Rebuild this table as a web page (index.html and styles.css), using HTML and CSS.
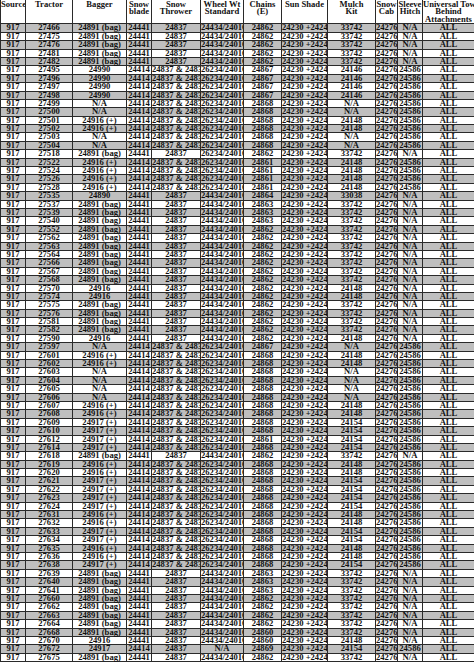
FILE: index.html
```html
<!DOCTYPE html>
<html>
<head>
<meta charset="utf-8">
<link rel="stylesheet" href="styles.css">
</head>
<body>
<div class="sheet">
<div class="row head"><div>Source</div><div>Tractor</div><div>Bagger</div><div>Snow<br>blade</div><div>Snow<br>Thrower</div><div>Wheel Wt<br>Standard</div><div>Chains<br>(E)</div><div>Sun Shade</div><div>Mulch<br>Kit</div><div>Snow<br>Cab</div><div>Sleeve<br>Hitch</div><div>Universal Tow<br>Behind<br>Attachments</div></div>
<div class="row g"><div>917</div><div>27466</div><div>24891 (bag)</div><div>24441</div><div>24837</div><div>24434/24016</div><div>24862</div><div>24230 +24240</div><div>33742</div><div>24276</div><div>N/A</div><div>ALL</div></div>
<div class="row"><div>917</div><div>27475</div><div>24891 (bag)</div><div>24441</div><div>24837</div><div>24434/24016</div><div>24862</div><div>24230 +24240</div><div>33742</div><div>24276</div><div>N/A</div><div>ALL</div></div>
<div class="row g"><div>917</div><div>27476</div><div>24891 (bag)</div><div>24441</div><div>24837</div><div>24434/24016</div><div>24862</div><div>24230 +24240</div><div>33742</div><div>24276</div><div>N/A</div><div>ALL</div></div>
<div class="row"><div>917</div><div>27481</div><div>24891 (bag)</div><div>24441</div><div>24837</div><div>24434/24016</div><div>24862</div><div>24230 +24240</div><div>33742</div><div>24276</div><div>N/A</div><div>ALL</div></div>
<div class="row g"><div>917</div><div>27482</div><div>24891 (bag)</div><div>24441</div><div>24837</div><div>24434/24016</div><div>24862</div><div>24230 +24240</div><div>33742</div><div>24276</div><div>N/A</div><div>ALL</div></div>
<div class="row"><div>917</div><div>27495</div><div>24990</div><div>24414</div><div>24837 &amp; 24831</div><div>26234/24016</div><div>24867</div><div>24230 +24240</div><div>24146</div><div>24276</div><div>24586</div><div>ALL</div></div>
<div class="row g"><div>917</div><div>27496</div><div>24990</div><div>24414</div><div>24837 &amp; 24831</div><div>26234/24016</div><div>24867</div><div>24230 +24240</div><div>24146</div><div>24276</div><div>24586</div><div>ALL</div></div>
<div class="row"><div>917</div><div>27497</div><div>24990</div><div>24414</div><div>24837 &amp; 24831</div><div>26234/24016</div><div>24867</div><div>24230 +24240</div><div>24146</div><div>24276</div><div>24586</div><div>ALL</div></div>
<div class="row g"><div>917</div><div>27498</div><div>24990</div><div>24414</div><div>24837 &amp; 24831</div><div>26234/24016</div><div>24867</div><div>24230 +24240</div><div>24146</div><div>24276</div><div>24586</div><div>ALL</div></div>
<div class="row"><div>917</div><div>27499</div><div>N/A</div><div>24414</div><div>24837 &amp; 24831</div><div>26234/24016</div><div>24868</div><div>24230 +24240</div><div>N/A</div><div>24276</div><div>24586</div><div>ALL</div></div>
<div class="row g"><div>917</div><div>27500</div><div>N/A</div><div>24414</div><div>24837 &amp; 24831</div><div>26234/24016</div><div>24868</div><div>24230 +24240</div><div>N/A</div><div>24276</div><div>24586</div><div>ALL</div></div>
<div class="row"><div>917</div><div>27501</div><div>24916 (+)</div><div>24414</div><div>24837 &amp; 24831</div><div>26234/24016</div><div>24868</div><div>24230 +24240</div><div>24148</div><div>24276</div><div>24586</div><div>ALL</div></div>
<div class="row g"><div>917</div><div>27502</div><div>24916 (+)</div><div>24414</div><div>24837 &amp; 24831</div><div>26234/24016</div><div>24868</div><div>24230 +24240</div><div>24148</div><div>24276</div><div>24586</div><div>ALL</div></div>
<div class="row"><div>917</div><div>27503</div><div>N/A</div><div>24414</div><div>24837 &amp; 24831</div><div>26234/24016</div><div>24868</div><div>24230 +24240</div><div>N/A</div><div>24276</div><div>24586</div><div>ALL</div></div>
<div class="row g"><div>917</div><div>27504</div><div>N/A</div><div>24414</div><div>24837 &amp; 24831</div><div>26234/24016</div><div>24868</div><div>24230 +24240</div><div>N/A</div><div>24276</div><div>24586</div><div>ALL</div></div>
<div class="row"><div>917</div><div>27518</div><div>24891 (bag)</div><div>24441</div><div>24837</div><div>26234/24016</div><div>24862</div><div>24230 +24240</div><div>33742</div><div>24276</div><div>N/A</div><div>ALL</div></div>
<div class="row g"><div>917</div><div>27522</div><div>24916 (+)</div><div>24414</div><div>24837 &amp; 24831</div><div>26234/24016</div><div>24861</div><div>24230 +24240</div><div>24148</div><div>24276</div><div>24586</div><div>ALL</div></div>
<div class="row"><div>917</div><div>27524</div><div>24916 (+)</div><div>24414</div><div>24837 &amp; 24831</div><div>26234/24016</div><div>24861</div><div>24230 +24240</div><div>24148</div><div>24276</div><div>24586</div><div>ALL</div></div>
<div class="row g"><div>917</div><div>27526</div><div>24916 (+)</div><div>24414</div><div>24837 &amp; 24831</div><div>26234/24016</div><div>24861</div><div>24230 +24240</div><div>24148</div><div>24276</div><div>24586</div><div>ALL</div></div>
<div class="row"><div>917</div><div>27528</div><div>24916 (+)</div><div>24414</div><div>24837 &amp; 24831</div><div>26234/24016</div><div>24861</div><div>24230 +24240</div><div>24148</div><div>24276</div><div>24586</div><div>ALL</div></div>
<div class="row g"><div>917</div><div>27535</div><div>24890</div><div>24441</div><div>24837</div><div>24434/24016</div><div>24864</div><div>24230 +24240</div><div>33038</div><div>24276</div><div>N/A</div><div>ALL</div></div>
<div class="row"><div>917</div><div>27537</div><div>24891 (bag)</div><div>24441</div><div>24837</div><div>24434/24016</div><div>24863</div><div>24230 +24240</div><div>33742</div><div>24276</div><div>N/A</div><div>ALL</div></div>
<div class="row g"><div>917</div><div>27539</div><div>24891 (bag)</div><div>24441</div><div>24837</div><div>24434/24016</div><div>24863</div><div>24230 +24240</div><div>33742</div><div>24276</div><div>N/A</div><div>ALL</div></div>
<div class="row"><div>917</div><div>27540</div><div>24891 (bag)</div><div>24441</div><div>24837</div><div>24434/24016</div><div>24863</div><div>24230 +24240</div><div>33742</div><div>24276</div><div>N/A</div><div>ALL</div></div>
<div class="row g"><div>917</div><div>27552</div><div>24891 (bag)</div><div>24441</div><div>24837</div><div>24434/24016</div><div>24862</div><div>24230 +24240</div><div>33742</div><div>24276</div><div>N/A</div><div>ALL</div></div>
<div class="row"><div>917</div><div>27562</div><div>24891 (bag)</div><div>24441</div><div>24837</div><div>24434/24016</div><div>24862</div><div>24230 +24240</div><div>33742</div><div>24276</div><div>N/A</div><div>ALL</div></div>
<div class="row g"><div>917</div><div>27563</div><div>24891 (bag)</div><div>24441</div><div>24837</div><div>24434/24016</div><div>24862</div><div>24230 +24240</div><div>33742</div><div>24276</div><div>N/A</div><div>ALL</div></div>
<div class="row"><div>917</div><div>27564</div><div>24891 (bag)</div><div>24441</div><div>24837</div><div>24434/24016</div><div>24862</div><div>24230 +24240</div><div>33742</div><div>24276</div><div>N/A</div><div>ALL</div></div>
<div class="row g"><div>917</div><div>27566</div><div>24891 (bag)</div><div>24441</div><div>24837</div><div>24434/24016</div><div>24862</div><div>24230 +24240</div><div>33742</div><div>24276</div><div>N/A</div><div>ALL</div></div>
<div class="row"><div>917</div><div>27567</div><div>24891 (bag)</div><div>24441</div><div>24837</div><div>24434/24016</div><div>24862</div><div>24230 +24240</div><div>33742</div><div>24276</div><div>N/A</div><div>ALL</div></div>
<div class="row g"><div>917</div><div>27568</div><div>24891 (bag)</div><div>24441</div><div>24837</div><div>24434/24016</div><div>24862</div><div>24230 +24240</div><div>33742</div><div>24276</div><div>N/A</div><div>ALL</div></div>
<div class="row"><div>917</div><div>27570</div><div>24916</div><div>24441</div><div>24837</div><div>24434/24016</div><div>24862</div><div>24230 +24240</div><div>24148</div><div>24276</div><div>N/A</div><div>ALL</div></div>
<div class="row g"><div>917</div><div>27574</div><div>24916</div><div>24441</div><div>24837</div><div>24434/24016</div><div>24862</div><div>24230 +24240</div><div>24148</div><div>24276</div><div>N/A</div><div>ALL</div></div>
<div class="row"><div>917</div><div>27575</div><div>24891 (bag)</div><div>24441</div><div>24837</div><div>24434/24016</div><div>24862</div><div>24230 +24240</div><div>33742</div><div>24276</div><div>N/A</div><div>ALL</div></div>
<div class="row g"><div>917</div><div>27576</div><div>24891 (bag)</div><div>24441</div><div>24837</div><div>24434/24016</div><div>24862</div><div>24230 +24240</div><div>33742</div><div>24276</div><div>N/A</div><div>ALL</div></div>
<div class="row"><div>917</div><div>27581</div><div>24891 (bag)</div><div>24441</div><div>24837</div><div>24434/24016</div><div>24862</div><div>24230 +24240</div><div>33742</div><div>24276</div><div>N/A</div><div>ALL</div></div>
<div class="row g"><div>917</div><div>27582</div><div>24891 (bag)</div><div>24441</div><div>24837</div><div>24434/24016</div><div>24862</div><div>24230 +24240</div><div>33742</div><div>24276</div><div>N/A</div><div>ALL</div></div>
<div class="row"><div>917</div><div>27590</div><div>24916</div><div>24441</div><div>24837</div><div>24434/24016</div><div>24862</div><div>24230 +24240</div><div>24148</div><div>24276</div><div>N/A</div><div>ALL</div></div>
<div class="row g"><div>917</div><div>27597</div><div>N/A</div><div>24414</div><div>24837 &amp; 24831</div><div>26234/24016</div><div>24867</div><div>24230 +24240</div><div>N/A</div><div>24276</div><div>24586</div><div>ALL</div></div>
<div class="row"><div>917</div><div>27601</div><div>24916 (+)</div><div>24414</div><div>24837 &amp; 24831</div><div>26234/24016</div><div>24868</div><div>24230 +24240</div><div>24148</div><div>24276</div><div>24586</div><div>ALL</div></div>
<div class="row g"><div>917</div><div>27602</div><div>24916 (+)</div><div>24414</div><div>24837 &amp; 24831</div><div>26234/24016</div><div>24868</div><div>24230 +24240</div><div>24148</div><div>24276</div><div>24586</div><div>ALL</div></div>
<div class="row"><div>917</div><div>27603</div><div>N/A</div><div>24414</div><div>24837 &amp; 24831</div><div>26234/24016</div><div>24868</div><div>24230 +24240</div><div>N/A</div><div>24276</div><div>24586</div><div>ALL</div></div>
<div class="row g"><div>917</div><div>27604</div><div>N/A</div><div>24414</div><div>24837 &amp; 24831</div><div>26234/24016</div><div>24868</div><div>24230 +24240</div><div>N/A</div><div>24276</div><div>24586</div><div>ALL</div></div>
<div class="row"><div>917</div><div>27605</div><div>N/A</div><div>24414</div><div>24837 &amp; 24831</div><div>26234/24016</div><div>24868</div><div>24230 +24240</div><div>N/A</div><div>24276</div><div>24586</div><div>ALL</div></div>
<div class="row g"><div>917</div><div>27606</div><div>N/A</div><div>24414</div><div>24837 &amp; 24831</div><div>26234/24016</div><div>24868</div><div>24230 +24240</div><div>N/A</div><div>24276</div><div>24586</div><div>ALL</div></div>
<div class="row"><div>917</div><div>27607</div><div>24916 (+)</div><div>24414</div><div>24837 &amp; 24831</div><div>26234/24016</div><div>24868</div><div>24230 +24240</div><div>24148</div><div>24276</div><div>24586</div><div>ALL</div></div>
<div class="row g"><div>917</div><div>27608</div><div>24916 (+)</div><div>24414</div><div>24837 &amp; 24831</div><div>26234/24016</div><div>24868</div><div>24230 +24240</div><div>24148</div><div>24276</div><div>24586</div><div>ALL</div></div>
<div class="row"><div>917</div><div>27609</div><div>24917 (+)</div><div>24414</div><div>24837 &amp; 24831</div><div>26234/24016</div><div>24868</div><div>24230 +24240</div><div>24154</div><div>24276</div><div>24586</div><div>ALL</div></div>
<div class="row g"><div>917</div><div>27610</div><div>24917 (+)</div><div>24414</div><div>24837 &amp; 24831</div><div>26234/24016</div><div>24868</div><div>24230 +24240</div><div>24154</div><div>24276</div><div>24586</div><div>ALL</div></div>
<div class="row"><div>917</div><div>27612</div><div>24917 (+)</div><div>24414</div><div>24837 &amp; 24831</div><div>26234/24016</div><div>24861</div><div>24230 +24240</div><div>24154</div><div>24276</div><div>24586</div><div>ALL</div></div>
<div class="row g"><div>917</div><div>27614</div><div>24917 (+)</div><div>24414</div><div>24837 &amp; 24831</div><div>26234/24016</div><div>24868</div><div>24230 +24240</div><div>24154</div><div>24276</div><div>24586</div><div>ALL</div></div>
<div class="row"><div>917</div><div>27618</div><div>24891 (bag)</div><div>24441</div><div>24837</div><div>24434/24016</div><div>24862</div><div>24230 +24240</div><div>33742</div><div>24276</div><div>N/A</div><div>ALL</div></div>
<div class="row g"><div>917</div><div>27619</div><div>24916 (+)</div><div>24414</div><div>24837 &amp; 24831</div><div>26234/24016</div><div>24868</div><div>24230 +24240</div><div>24148</div><div>24276</div><div>24586</div><div>ALL</div></div>
<div class="row"><div>917</div><div>27620</div><div>24916 (+)</div><div>24414</div><div>24837 &amp; 24831</div><div>26234/24016</div><div>24868</div><div>24230 +24240</div><div>24148</div><div>24276</div><div>24586</div><div>ALL</div></div>
<div class="row g"><div>917</div><div>27621</div><div>24917 (+)</div><div>24414</div><div>24837 &amp; 24831</div><div>26234/24016</div><div>24868</div><div>24230 +24240</div><div>24154</div><div>24276</div><div>24586</div><div>ALL</div></div>
<div class="row"><div>917</div><div>27622</div><div>24917 (+)</div><div>24414</div><div>24837 &amp; 24831</div><div>26234/24016</div><div>24868</div><div>24230 +24240</div><div>24154</div><div>24276</div><div>24586</div><div>ALL</div></div>
<div class="row g"><div>917</div><div>27623</div><div>24917 (+)</div><div>24414</div><div>24837 &amp; 24831</div><div>26234/24016</div><div>24868</div><div>24230 +24240</div><div>24154</div><div>24276</div><div>24586</div><div>ALL</div></div>
<div class="row"><div>917</div><div>27624</div><div>24917 (+)</div><div>24414</div><div>24837 &amp; 24831</div><div>26234/24016</div><div>24868</div><div>24230 +24240</div><div>24154</div><div>24276</div><div>24586</div><div>ALL</div></div>
<div class="row g"><div>917</div><div>27631</div><div>24916 (+)</div><div>24414</div><div>24837 &amp; 24831</div><div>26234/24016</div><div>24868</div><div>24230 +24240</div><div>24148</div><div>24276</div><div>24586</div><div>ALL</div></div>
<div class="row"><div>917</div><div>27632</div><div>24916 (+)</div><div>24414</div><div>24837 &amp; 24831</div><div>26234/24016</div><div>24868</div><div>24230 +24240</div><div>24148</div><div>24276</div><div>24586</div><div>ALL</div></div>
<div class="row g"><div>917</div><div>27633</div><div>24917 (+)</div><div>24414</div><div>24837 &amp; 24831</div><div>26234/24016</div><div>24868</div><div>24230 +24240</div><div>24154</div><div>24276</div><div>24586</div><div>ALL</div></div>
<div class="row"><div>917</div><div>27634</div><div>24917 (+)</div><div>24414</div><div>24837 &amp; 24831</div><div>26234/24016</div><div>24868</div><div>24230 +24240</div><div>24154</div><div>24276</div><div>24586</div><div>ALL</div></div>
<div class="row g"><div>917</div><div>27635</div><div>24916 (+)</div><div>24414</div><div>24837 &amp; 24831</div><div>26234/24016</div><div>24868</div><div>24230 +24240</div><div>24148</div><div>24276</div><div>24586</div><div>ALL</div></div>
<div class="row"><div>917</div><div>27636</div><div>24916 (+)</div><div>24414</div><div>24837 &amp; 24831</div><div>26234/24016</div><div>24868</div><div>24230 +24240</div><div>24148</div><div>24276</div><div>24586</div><div>ALL</div></div>
<div class="row g"><div>917</div><div>27638</div><div>24917 (+)</div><div>24414</div><div>24837 &amp; 24831</div><div>26234/24016</div><div>24868</div><div>24230 +24240</div><div>24154</div><div>24276</div><div>24586</div><div>ALL</div></div>
<div class="row"><div>917</div><div>27639</div><div>24891 (bag)</div><div>24441</div><div>24837</div><div>24434/24016</div><div>24863</div><div>24230 +24240</div><div>33742</div><div>24276</div><div>N/A</div><div>ALL</div></div>
<div class="row g"><div>917</div><div>27640</div><div>24891 (bag)</div><div>24441</div><div>24837</div><div>24434/24016</div><div>24863</div><div>24230 +24240</div><div>33742</div><div>24276</div><div>N/A</div><div>ALL</div></div>
<div class="row"><div>917</div><div>27641</div><div>24891 (bag)</div><div>24441</div><div>24837</div><div>24434/24016</div><div>24863</div><div>24230 +24240</div><div>33742</div><div>24276</div><div>N/A</div><div>ALL</div></div>
<div class="row g"><div>917</div><div>27660</div><div>24891 (bag)</div><div>24441</div><div>24837</div><div>24434/24016</div><div>24862</div><div>24230 +24240</div><div>33742</div><div>24276</div><div>N/A</div><div>ALL</div></div>
<div class="row"><div>917</div><div>27662</div><div>24891 (bag)</div><div>24441</div><div>24837</div><div>24434/24016</div><div>24862</div><div>24230 +24240</div><div>33742</div><div>24276</div><div>N/A</div><div>ALL</div></div>
<div class="row g"><div>917</div><div>27663</div><div>24891 (bag)</div><div>24441</div><div>24837</div><div>24434/24016</div><div>24862</div><div>24230 +24240</div><div>33742</div><div>24276</div><div>N/A</div><div>ALL</div></div>
<div class="row"><div>917</div><div>27664</div><div>24891 (bag)</div><div>24441</div><div>24837</div><div>24434/24016</div><div>24862</div><div>24230 +24240</div><div>33742</div><div>24276</div><div>N/A</div><div>ALL</div></div>
<div class="row g"><div>917</div><div>27668</div><div>24891 (bag)</div><div>24441</div><div>24837</div><div>24434/24016</div><div>24860</div><div>24230 +24240</div><div>33742</div><div>24276</div><div>N/A</div><div>ALL</div></div>
<div class="row"><div>917</div><div>27670</div><div>24916</div><div>24441</div><div>24837</div><div>24434/24016</div><div>24860</div><div>24230 +24240</div><div>24148</div><div>24276</div><div>N/A</div><div>ALL</div></div>
<div class="row g"><div>917</div><div>27672</div><div>24917</div><div>24414</div><div>24837</div><div>N/A</div><div>24869</div><div>24230 +24240</div><div>24154</div><div>24276</div><div>24586</div><div>ALL</div></div>
<div class="row"><div>917</div><div>27675</div><div>24891 (bag)</div><div>24441</div><div>24837</div><div>24434/24016</div><div>24862</div><div>24230 +24240</div><div>33742</div><div>24276</div><div>N/A</div><div>ALL</div></div>
</div>
</body>
</html>
```
FILE: styles.css
```css
html, body {
  margin: 0;
  padding: 0;
  background: #ffffff;
}

.sheet {
  width: 474px;
  font-family: "Liberation Serif", "Times New Roman", serif;
  font-weight: bold;
  font-size: 8.6px;
  color: #111;
  border-left: 1px solid #2a2a2a;
  box-sizing: border-box;
}

.row {
  display: grid;
  grid-template-columns: 25px 47px 54px 25px 49px 43px 38px 46px 48px 22px 25px 51px;
  height: 8.4px;
  box-sizing: border-box;
  border-bottom: 1px solid #2a2a2a;
}

.row > div {
  box-sizing: border-box;
  border-right: 1px solid #2a2a2a;
  text-align: center;
  white-space: nowrap;
  overflow-x: clip;
  overflow-y: visible;
  line-height: 7.4px;
  height: 7.4px;
}

.row > div:last-child {
  border-right: none;
}

.row.g {
  background: #bfbfbf;
}

.row.head {
  height: 24.4px;
  background: #ffffff;
}

.row.head > div {
  height: auto;
  line-height: 7.8px;
  padding-top: 0.5px;
}
```
